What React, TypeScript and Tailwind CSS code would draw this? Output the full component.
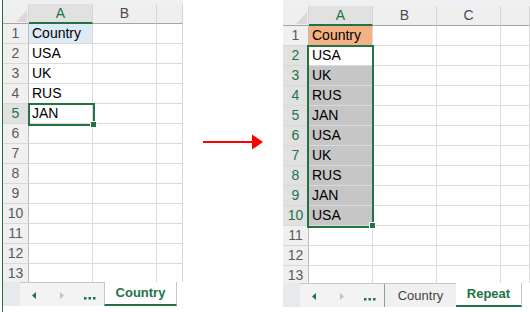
import React from 'react';

type Row = { value?: string; fill?: string; selected?: boolean };

interface SheetProps {
    rows: Row[];
    cols: string[];
    topStrip: string;
    gridHeight: string;
    box: { left: number; top: number; width: number; height: number };
    handle: { left: number; top: number };
    tabs: React.ReactNode;
    greenEdge?: boolean;
    width: string;
}

const GREEN = '#217346';

const LeftArrow = ({ color }: { color: string }) => (
    <svg width="4" height="7" viewBox="0 0 4 7"><polygon points="4,0 0,3.5 4,7" fill={color} /></svg>
);
const RightArrow = ({ color }: { color: string }) => (
    <svg width="4" height="7" viewBox="0 0 4 7"><polygon points="0,0 4,3.5 0,7" fill={color} /></svg>
);
const Dots = () => (
    <svg width="12" height="3" viewBox="0 0 12 3">
        <rect x="0" y="0" width="2.5" height="2.5" fill={GREEN} />
        <rect x="4.5" y="0" width="2.5" height="2.5" fill={GREEN} />
        <rect x="9" y="0" width="2.5" height="2.5" fill={GREEN} />
    </svg>
);

const Nav = () => (
    <div className="flex h-full items-center">
        <div className="w-[17px] h-full bg-[#e6eaed]" />
        <div className="relative w-[84px] h-full bg-[#f3f3f3] border-t border-[#c8c8c8]">
            <div className="absolute left-[12px] top-[9px]"><LeftArrow color={GREEN} /></div>
            <div className="absolute left-[40px] top-[9px]"><RightArrow color="#c3c3c3" /></div>
            <div className="absolute left-[64px] top-[14px]"><Dots /></div>
        </div>
    </div>
);

const Sheet: React.FC<SheetProps> = ({ rows, cols, topStrip, gridHeight, box, handle, tabs, greenEdge, width }) => {
    return (
        <div className={`${width} h-full flex flex-col ${greenEdge ? 'border-l border-[#217346]' : ''}`}>
            <div className={`${topStrip} bg-[#eef1f3]`} />
            {/* column headers */}
            <div className="flex h-[20px] bg-[#efefef] text-[14px] text-[#4a4a4a]">
                <div className="relative w-[26px] h-full border-r border-b border-r-[#d4d4d4] border-b-[#a6a6a6]">
                    <svg className="absolute left-[13px] top-[6px]" width="11" height="12" viewBox="0 0 11 12">
                        <polygon points="11,0 11,12 0,12" fill="#d9d9d9" />
                    </svg>
                </div>
                {cols.map((c, i) => (
                    <div
                        key={i}
                        className={`${i === cols.length - 1 ? 'flex-1' : 'w-[64px]'} h-full flex items-center justify-center border-r border-r-[#d4d4d4] ${
                            c === 'A' ? 'border-b-2 border-b-[#217346] bg-[#e1e1e1] text-[#217346]' : 'border-b border-b-[#a6a6a6]'
                        }`}
                    >
                        {c}
                    </div>
                ))}
            </div>
            {/* rows */}
            <div className={`relative ${gridHeight} shrink-0 overflow-hidden`}>
                {Array.from({ length: 13 }).map((_, r) => {
                    const row = rows[r] || {};
                    return (
                        <div key={r} className="flex h-[20px]">
                            <div
                                className={`w-[26px] h-full border-r border-b border-r-[#bdbdbd] border-b-[#d9d9d9] flex items-center justify-center text-[14px] ${
                                    row.selected ? 'bg-[#e1e1e1] text-[#217346]' : 'bg-[#f0f0f0] text-[#5a5a5a]'
                                }`}
                            >
                                {r + 1}
                            </div>
                            {cols.map((_, i) => (
                                <div
                                    key={i}
                                    className={`${i === cols.length - 1 ? 'flex-1' : 'w-[64px]'} h-full border-r border-b border-[#dadada] pl-[3px] flex items-center text-[14px] text-black`}
                                    style={i === 0 && row.fill ? { backgroundColor: row.fill } : undefined}
                                >
                                    {i === 0 ? row.value : ''}
                                </div>
                            ))}
                        </div>
                    );
                })}
                <div
                    className="absolute border-2 border-[#217346]"
                    style={{ left: box.left, top: box.top, width: box.width, height: box.height }}
                />
                <div
                    className="absolute w-[7px] h-[7px] bg-[#217346] border border-white"
                    style={{ left: handle.left, top: handle.top }}
                />
            </div>
            <div className="h-[24px] shrink-0 flex">
                <Nav />
                {tabs}
            </div>
            <div className="flex-1" />
        </div>
    );
};

export default function App() {
    const leftRows: Row[] = [
        { value: 'Country', fill: '#ddebf7' },
        { value: 'USA' },
        { value: 'UK' },
        { value: 'RUS' },
        { value: 'JAN', selected: true },
    ];
    const list = ['USA', 'UK', 'RUS', 'JAN', 'USA', 'UK', 'RUS', 'JAN', 'USA'];
    const rightRows: Row[] = [
        { value: 'Country', fill: '#f4b183' },
        ...list.map((v, i) => ({ value: v, selected: true, fill: i === 0 ? '#ffffff' : '#c6c6c6' })),
    ];

    return (
        <div className="w-[530px] h-[312px] bg-white flex font-['Liberation_Sans',Arial,sans-serif] overflow-hidden">
            <div className="w-[2px]" />
            <Sheet
                width="w-[181px]"
                greenEdge
                rows={leftRows}
                cols={['A', 'B', '']}
                topStrip="h-[4px]"
                gridHeight="h-[258px]"
                box={{ left: 25, top: 79, width: 67, height: 23 }}
                handle={{ left: 87, top: 97 }}
                tabs={
                    <>
                        <div className="w-[73px] h-full bg-white border-l border-r border-[#c6c6c6] border-b-2 border-b-[#217346] flex items-center justify-center text-[13px] font-bold text-[#217346]">
                            Country
                        </div>
                        <div className="flex-1" />
                    </>
                }
            />
            <div className="w-[100px]">
                <svg className="ml-[20px] mt-[134px]" width="60" height="16" viewBox="0 0 60 16">
                    <line x1="0" y1="8" x2="50" y2="8" stroke="#ff0000" strokeWidth="2" />
                    <polygon points="49,0.5 60,8 49,15.5" fill="#ff0000" />
                </svg>
            </div>
            <Sheet
                width="w-[247px]"
                rows={rightRows}
                cols={['A', 'B', 'C', '']}
                topStrip="h-[6px]"
                gridHeight="h-[257px]"
                box={{ left: 24, top: 19, width: 67, height: 183 }}
                handle={{ left: 86, top: 196 }}
                tabs={
                    <>
                        <div className="w-[72px] h-full bg-[#f0f0f0] border-l border-l-[#9a9a9a] border-t border-t-[#c8c8c8] flex items-center justify-center text-[13px] text-[#444]">
                            Country
                        </div>
                        <div className="w-[66px] h-full bg-white border-r border-[#c6c6c6] border-b-2 border-b-[#217346] flex items-center justify-center text-[13px] font-bold text-[#217346]">
                            Repeat
                        </div>
                        <div className="flex-1 bg-white" />
                    </>
                }
            />
        </div>
    );
}
